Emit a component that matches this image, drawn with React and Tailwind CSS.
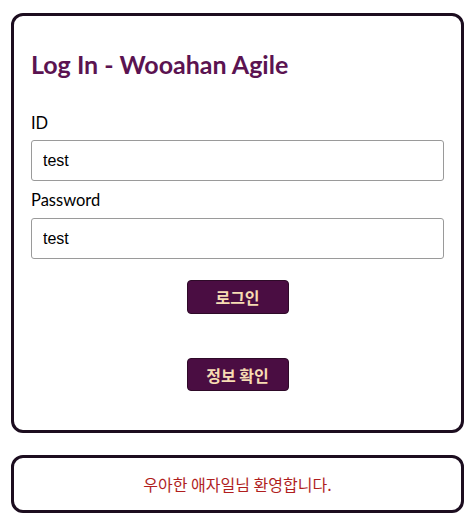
export default function App() {
  return (
    <div className="w-[474px] h-[519px] bg-white pt-[13px]" style={{ fontFamily: 'Lato, "Noto Sans CJK KR", sans-serif' }}>
      <div className="ml-[11px] w-[453px] border-[3px] border-[#1c0d1f] rounded-[12px] px-[17px] pt-[34px] pb-[39px]">
        <h2 className="text-[25px] leading-[29px] font-bold text-[#5b1351] m-0">Log In - Wooahan Agile</h2>
        <div className="mt-[32px] text-[16.5px] leading-[24px] text-black">ID</div>
        <input
          readOnly
          value="test"
          className="mt-[5px] block w-full h-[41px] border border-[#9a9a9a] rounded-[3px] px-[11px] text-[16px] text-black"
          style={{ fontFamily: '"Liberation Sans", Arial, sans-serif' }}
        />
        <div className="mt-[7px] text-[16.5px] leading-[24px] text-black">Password</div>
        <input
          readOnly
          value="test"
          className="mt-[6px] block w-full h-[41px] border border-[#9a9a9a] rounded-[3px] px-[11px] text-[16px] text-black"
          style={{ fontFamily: '"Liberation Sans", Arial, sans-serif' }}
        />
        <div className="flex flex-col items-center">
          <button className="mt-[21px] w-[102px] h-[34px] bg-[#4a0d42] text-[#f7dcb3] rounded-[4px] border border-[#2e0a28] text-[16px] font-bold" style={{ fontFamily: '"Noto Sans CJK KR", sans-serif' }}>로그인</button>
          <button className="mt-[44px] w-[102px] h-[33px] bg-[#4a0d42] text-[#f7dcb3] rounded-[4px] border border-[#2e0a28] text-[16px] font-bold" style={{ fontFamily: '"Noto Sans CJK KR", sans-serif' }}>정보 확인</button>
        </div>
      </div>
      <div className="ml-[11px] mt-[22px] w-[453px] h-[58px] border-[3px] border-[#1c0d1f] rounded-[12px] flex items-center justify-center">
        <span className="text-[16px] text-[#b01e1e]" style={{ fontFamily: '"Noto Sans CJK KR", sans-serif' }}>우아한 애자일님 환영합니다.</span>
      </div>
    </div>
  );
}
